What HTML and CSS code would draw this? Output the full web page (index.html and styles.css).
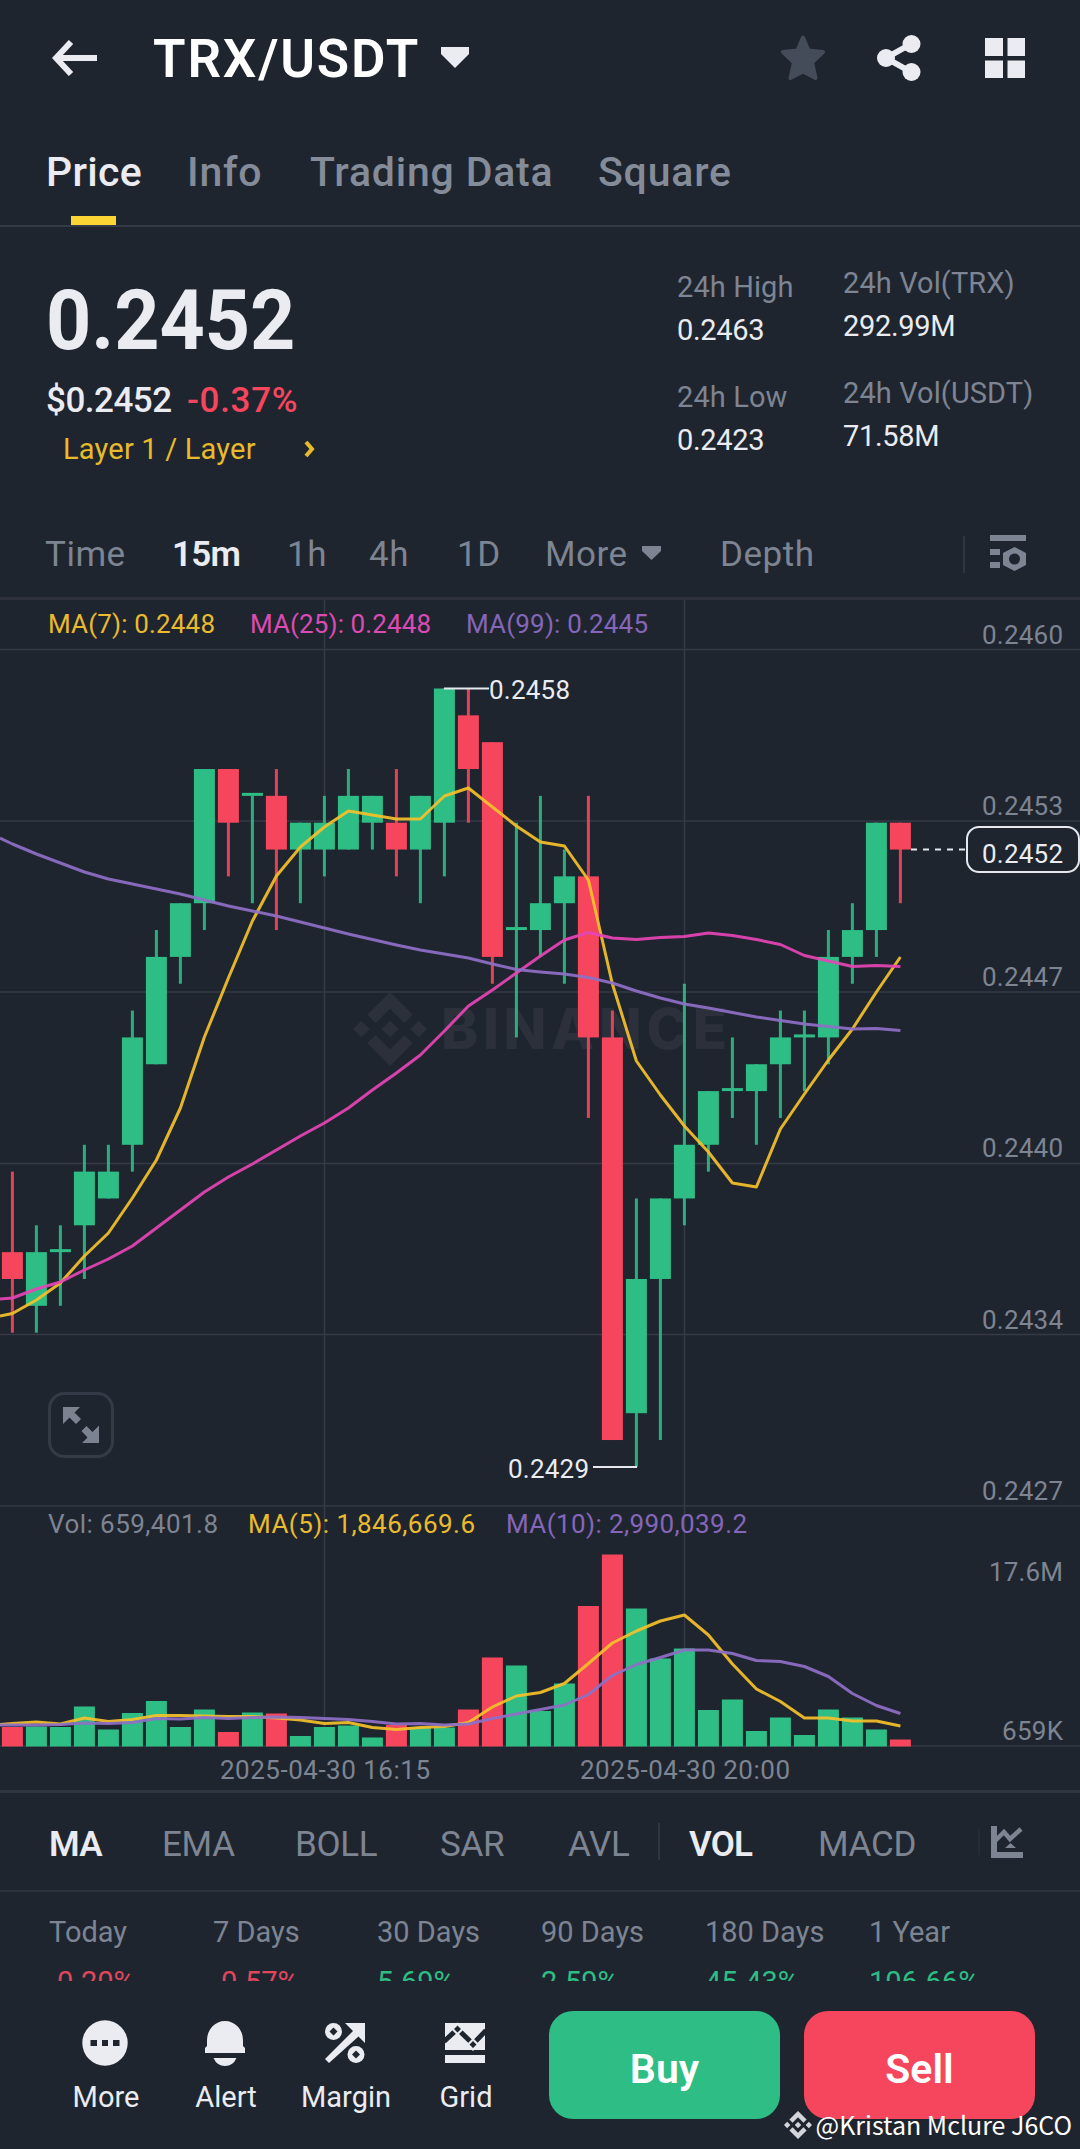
FILE: index.html
```html
<!DOCTYPE html>
<html lang="en">
<head>
    <meta charset="UTF-8">
    <title>TRX/USDT</title>
    <link rel="stylesheet" href="styles.css">
</head>
<body>
<div id="app">
    <header class="header">
        <svg class="icon-back" viewBox="0 0 46 36"><path d="M19 2 L4 18 L19 34 M4 18 H45" fill="none" stroke="currentColor" stroke-width="6"/></svg>
        <h1 class="pair">TRX/USDT</h1>
        <svg class="icon-caret" viewBox="0 0 28 21"><path d="M0 0H28V7L14 21L0 7Z" fill="currentColor"/></svg>
        <svg class="icon-star" viewBox="0 0 46 46"><path d="M23 2.500L28.500 15.500L43 17L32 27.500L35.500 43L23 36.500L10.500 43L14 27.500L3 17L17.500 15.500Z" fill="currentColor" stroke="currentColor" stroke-width="4" stroke-linejoin="round"/></svg>
        <svg class="icon-share" viewBox="0 0 44 46"><path d="M34 9L9 23L34 37" fill="none" stroke="currentColor" stroke-width="6"/><circle cx="34.500" cy="9" r="9"/><circle cx="9" cy="23" r="9"/><circle cx="34.500" cy="37" r="9"/></svg>
        <svg class="icon-grid" viewBox="0 0 40 40"><path d="M0 0H18V18H0ZM22.500 0H40V18H22.500ZM0 22.500H18V40H0ZM22.500 22.500H40V40H22.500Z" fill="currentColor"/></svg>
    </header>

    <ul class="tabs">
        <li class="tab-item selected">Price</li>
        <li class="tab-item">Info</li>
        <li class="tab-item">Trading Data</li>
        <li class="tab-item">Square</li>
    </ul>

    <section class="ticker">
        <div class="ticker-main">
            <div class="price">0.2452</div>
            <div class="price-sub"><span class="price-usd">$0.2452</span><span class="price-change">-0.37%</span></div>
            <div class="tag"><span>Layer 1 / Layer</span><svg viewBox="0 0 11 18"><path d="M2 2L8 9L2 16" fill="none" stroke="currentColor" stroke-width="4"/></svg></div>
        </div>
        <dl class="stats stats-left">
            <dt>24h High</dt><dd>0.2463</dd>
            <dt>24h Low</dt><dd>0.2423</dd>
        </dl>
        <dl class="stats stats-right">
            <dt>24h Vol(TRX)</dt><dd>292.99M</dd>
            <dt>24h Vol(USDT)</dt><dd>71.58M</dd>
        </dl>
    </section>

    <nav class="periods">
        <span>Time</span>
        <span class="active">15m</span>
        <span>1h</span>
        <span>4h</span>
        <span>1D</span>
        <span class="more">More<svg viewBox="0 0 19 14"><path d="M0 0H19V5L9.500 14L0 5Z" fill="currentColor"/></svg></span>
        <span>Depth</span>
        <i class="divider"></i>
        <svg class="icon-settings" viewBox="0 0 36 36"><path d="M0 0H36V6H0ZM0 14H10V20H0ZM0 27H10V33H0Z" fill="currentColor"/><path fill-rule="evenodd" d="M24.500 12L36 18V30L24.500 36L13 30V18ZM24.500 18.500A5.500 5.500 0 1 0 24.500 29.500A5.500 5.500 0 1 0 24.500 18.500Z" fill="currentColor"/></svg>
    </nav>

    <svg id="chart" viewBox="0 600 1080 1190">
        <g class="grid">
            <path d="M0 649.500H1080M0 821H1080M0 992H1080M0 1163.500H1080M0 1334.500H1080M0 1506H1080M0 1746H1080"/>
            <path d="M324.500 600V1746M684.500 600V1746"/>
        </g>
        <g class="watermark">
            <svg x="353" y="992" width="74" height="74" viewBox="0 0 126.600 126.600"><use href="#logo"/></svg>
            <text x="441" y="1049" textLength="286">BINANCE</text>
        </g>
        <g id="candles"></g>
        <g id="volumes"></g>
        <g id="lines"></g>
        <g class="legend">
            <text class="ma-yellow" x="48" y="633" textLength="167">MA(7): 0.2448</text>
            <text class="ma-pink" x="250" y="633" textLength="181">MA(25): 0.2448</text>
            <text class="ma-purple" x="466" y="633" textLength="182">MA(99): 0.2445</text>
            <text x="48" y="1533" textLength="170">Vol: 659,401.8</text>
            <text class="ma-yellow" x="248" y="1533" textLength="227">MA(5): 1,846,669.6</text>
            <text class="ma-purple" x="506" y="1533" textLength="241">MA(10): 2,990,039.2</text>
        </g>
        <g class="axis">
            <text x="982" y="644" textLength="81">0.2460</text>
            <text x="982" y="815" textLength="81">0.2453</text>
            <text x="982" y="986" textLength="81">0.2447</text>
            <text x="982" y="1157" textLength="81">0.2440</text>
            <text x="982" y="1329" textLength="81">0.2434</text>
            <text x="982" y="1500" textLength="81">0.2427</text>
            <text x="989" y="1581" textLength="74">17.6M</text>
            <text x="1002" y="1740" textLength="61">659K</text>
            <text x="220" y="1779" textLength="210">2025-04-30 16:15</text>
            <text x="580" y="1779" textLength="210">2025-04-30 20:00</text>
        </g>
        <g class="marks">
            <path d="M444 688.500H489M593 1467H637"/>
            <path d="M911 849.500H966" stroke-dasharray="6 6"/>
            <rect x="967" y="827" width="112" height="45" rx="12"/>
            <text x="489" y="699" textLength="81">0.2458</text>
            <text x="508" y="1478" textLength="81">0.2429</text>
            <text x="982" y="863" textLength="81">0.2452</text>
        </g>
        <g class="expand">
            <rect x="49.500" y="1393.500" width="63" height="63" rx="15"/>
            <path d="M63 1407H80L74.500 1412.500L81 1419L76 1424L69.500 1417.500L63 1424ZM99 1443H82L87.500 1437.500L81.500 1431L86.500 1426L92.500 1432L99 1425.500Z"/>
        </g>
    </svg>

    <nav class="indicators">
        <span class="active">MA</span>
        <span>EMA</span>
        <span>BOLL</span>
        <span>SAR</span>
        <span>AVL</span>
        <i class="divider"></i>
        <span class="active">VOL</span>
        <span>MACD</span>
        <i class="divider faint"></i>
        <svg class="icon-lines" viewBox="0 0 32 32"><path d="M0 0H6V26H32V32H0ZM19.500 17L25 22H14Z" fill="currentColor"/><path d="M4 15L13 6L19 13L30 3" fill="none" stroke="currentColor" stroke-width="4.500"/></svg>
    </nav>

    <section class="history">
        <div class="history-item down"><h4>Today</h4><p>-0.20%</p></div>
        <div class="history-item down"><h4>7 Days</h4><p>-0.57%</p></div>
        <div class="history-item"><h4>30 Days</h4><p>5.69%</p></div>
        <div class="history-item"><h4>90 Days</h4><p>2.59%</p></div>
        <div class="history-item"><h4>180 Days</h4><p>45.43%</p></div>
        <div class="history-item"><h4>1 Year</h4><p>106.66%</p></div>
    </section>

    <footer class="bottom">
        <div class="action">
            <svg viewBox="0 0 46 46"><circle cx="23" cy="23" r="22.700"/><path class="hole" d="M8.500 20H15V26H8.500ZM20 20H26V26H20ZM31 20H37.500V26H31Z"/></svg>
            <span>More</span>
        </div>
        <div class="action">
            <svg viewBox="0 0 46 46"><path d="M5 20A18 19 0 0 1 41 20V26L43 28V33H3V28L5 26ZM11.500 38H34.500Q31 46 23 46T11.500 38Z"/></svg>
            <span>Alert</span>
        </div>
        <div class="action">
            <svg viewBox="0 0 46 46"><path d="M23 3H43V23L36.500 16.500L7 43L3 39L31 11Z"/><circle cx="11.500" cy="11.500" r="8.500"/><circle cx="34" cy="34.500" r="8.500"/><path class="hole" d="M11.500 7.500L15.500 11.500L11.500 15.500L7.500 11.500ZM34 30.500L38 34.500L34 38.500L30 34.500Z"/></svg>
            <span>Margin</span>
        </div>
        <div class="action">
            <svg viewBox="0 0 46 46"><path d="M3 3H43V30H3ZM3 35H43V43H3Z"/><path class="hole-line" d="M2 21.500L15.500 9L31 24L44 10.500"/><path class="node" d="M15.500 2.500L22 9L15.500 15.500L9 9ZM31 18L37.500 24.500L31 31L24.500 24.500Z"/><path class="hole" d="M15.500 5.500L19 9L15.500 12.500L12 9ZM31 21L34.500 24.500L31 28L27.500 24.500Z"/></svg>
            <span>Grid</span>
        </div>
        <button class="btn btn-buy">Buy</button>
        <button class="btn btn-sell">Sell</button>
    </footer>

    <div class="author">
        <svg viewBox="0 0 126.600 126.600"><path id="logo" d="M38.730 53.200L63.320 28.620L87.920 53.220L102.220 38.910L63.320 0L24.420 38.890ZM0 63.310L14.300 49L28.610 63.310L14.300 77.610ZM38.730 73.410L63.320 98L87.920 73.400L102.230 87.690L63.330 126.600L24.420 87.720ZM98 63.310L112.300 49L126.610 63.310L112.310 77.620ZM77.830 63.300L63.320 48.780L48.790 63.300L63.320 77.830Z"/></svg>
        <span>@Kristan Mclure J6CO</span>
    </div>
</div>
<script>
    // One row per candle: direction, high, open/close top, open/close bottom, low, volume height.
    // Prices are counted in ticks below 0.2458
    let data = [
        ["r", 18, 21, 22, 24, 19.5], ["g", 20, 21, 23, 24, 20], ["g", 20, 21, 21, 23, 19.5],
        ["g", 17, 18, 20, 22, 40], ["g", 17, 18, 19, 19, 17], ["g", 12, 13, 17, 18, 33.5],
        ["g", 9, 10, 14, 14, 45.5], ["g", 8, 8, 10, 11, 19.5], ["g", 3, 3, 8, 9, 37],
        ["r", 3, 3, 5, 7, 14.5], ["g", 4, 4, 4, 8, 34], ["r", 3, 4, 6, 9, 33],
        ["g", 5, 5, 6, 8, 10.5], ["g", 4, 5, 6, 7, 19.5], ["g", 3, 4, 6, 6, 21],
        ["g", 4, 4, 5, 6, 9], ["r", 3, 5, 6, 7, 21.5], ["g", 4, 4, 6, 8, 19.5],
        ["g", 0, 0, 5, 7, 19], ["r", 0, 1, 3, 5, 37], ["r", 2, 2, 10, 11, 89],
        ["g", 5, 9, 9, 13, 81], ["g", 4, 8, 9, 10, 35.5], ["g", 6, 7, 8, 11, 63],
        ["r", 4, 7, 13, 16, 140.5], ["r", 12, 13, 28, 28, 192], ["g", 19, 22, 27, 29, 138],
        ["g", 19, 19, 22, 28, 88], ["g", 11, 17, 19, 20, 98], ["g", 15, 15, 17, 18, 36.5],
        ["g", 13, 15, 15, 16, 47], ["g", 14, 14, 15, 17, 15.5], ["g", 12, 13, 14, 16, 29],
        ["g", 12, 13, 13, 15, 11.5], ["g", 9, 10, 13, 14, 37], ["g", 8, 9, 10, 11, 29],
        ["g", 5, 5, 9, 10, 17], ["r", 5, 5, 6, 8, 7]
    ];
    // y of every average line at each candle, the first value is at the left edge
    let averages = {
        "ma-yellow": [
            [1316, 1313.5, 1300, 1283, 1256, 1233, 1198, 1160, 1108, 1037, 978, 921, 876, 847, 827, 811, 815, 819, 819, 796, 788, 807, 826, 842, 846, 880, 984, 1061, 1095, 1126, 1152, 1183, 1187, 1129, 1094, 1060, 1029, 992, 957],
            [1724.5, 1723.5, 1722, 1724, 1718, 1721.5, 1719.5, 1715.5, 1715.5, 1716, 1716.5, 1716.5, 1718, 1720, 1723.5, 1722.5, 1727.5, 1729.5, 1727.5, 1726.5, 1722.5, 1707, 1696, 1692.5, 1683.5, 1663.5, 1643, 1631, 1621, 1615, 1635, 1664, 1689, 1701.5, 1718, 1718, 1721, 1721, 1726]
        ],
        "ma-pink": [
            [1299, 1298, 1289, 1282, 1270, 1259, 1246, 1228, 1210, 1192, 1177, 1164, 1150, 1136, 1123, 1108, 1090, 1073, 1055, 1031, 1006, 990, 973, 956, 940, 932.5, 938, 939.5, 937.5, 936.5, 933, 935.5, 939.5, 944.5, 955.5, 961, 966.5, 965.5, 966.5]
        ],
        "ma-purple": [
            [838, 844, 854, 863, 872, 879, 884, 889, 894, 900, 906, 911, 916, 922, 928, 934, 939.5, 945, 950, 954, 958, 964, 969.5, 972, 974, 977.5, 983, 991, 998, 1004, 1008, 1012.5, 1017, 1020.5, 1024, 1026.5, 1029, 1028.5, 1030.5],
            [1725, 1725, 1725, 1724.5, 1723, 1723.5, 1722.5, 1718.5, 1719, 1717.5, 1718.5, 1717.5, 1717, 1717.5, 1718.5, 1719.5, 1721.5, 1724, 1723.5, 1725, 1724, 1718.5, 1714, 1709.5, 1705, 1694.5, 1675.5, 1664.5, 1657.5, 1650, 1650, 1653.5, 1660.5, 1661.5, 1666.5, 1676.5, 1693.5, 1705.5, 1713.5]
        ]
    };
    let STEP = 24, LEFT = 12.4, TOP = 688.5, TICK = 26.84, BASE = 1746.5;
    let y = n => TOP + n * TICK;
    let candles = "", volumes = "", lines = "";
    data.forEach(([dir, high, top, bottom, low, vol], i) => {
        let x = LEFT + i * STEP;
        // a candle without a body is a thin dash
        let bodyY = top === bottom ? y(top) - 3 : y(top);
        let bodyH = top === bottom ? 3 : (bottom - top) * TICK;
        candles += `<rect class="${dir} wick" x="${x - 1.5}" y="${y(high)}" width="3" height="${(low - high) * TICK}"/>`;
        candles += `<rect class="${dir}" x="${x - 10.5}" y="${bodyY}" width="21" height="${bodyH}"/>`;
        volumes += `<rect class="${dir}" x="${x - 10.5}" y="${BASE - vol}" width="21" height="${vol}"/>`;
    });
    for(let name in averages){
        averages[name].forEach(line => {
            let points = line.map((v, i) => (i === 0 ? 0 : LEFT + (i - 1) * STEP) + "," + v);
            lines += `<polyline class="${name}" points="${points.join(" ")}"/>`;
        });
    }
    document.querySelector("#candles").innerHTML = candles;
    document.querySelector("#volumes").innerHTML = volumes;
    document.querySelector("#lines").innerHTML = lines;
</script>
</body>
</html>
```
FILE: styles.css
```css
*{
    margin: 0;
    padding: 0;
    box-sizing: border-box;
}
body{
    background: #1f252f;
    color: #eaecf1;
    font-family: Roboto, "Liberation Sans", sans-serif;
}
#app{
    position: relative;
    width: 1080px;
    height: 2149px;
    overflow: hidden;
}
svg{
    display: block;
    flex: none;
    fill: currentColor;
}
ul{
    list-style: none;
}
.header{
    display: flex;
    align-items: center;
    height: 117px;
    padding: 0 0 2px 52px;
}
.icon-back{
    width: 46px;
    height: 36px;
}
.pair{
    width: 288px;
    margin-left: 55px;
    padding-top: 3px;
    font-size: 53px;
    font-weight: 600;
    letter-spacing: 1.8px;
    color: #fff;
}
.icon-caret{
    width: 28px;
    height: 21px;
}
.icon-star{
    width: 46px;
    height: 46px;
    margin-left: 311px;
    color: #454c59;
}
.icon-share{
    width: 44px;
    height: 46px;
    margin-left: 51px;
}
.icon-grid{
    width: 40px;
    height: 40px;
    margin-left: 64px;
}
.tabs{
    display: grid;
    grid-template-columns: 141px 123px 288px auto;
    height: 110px;
    padding-left: 46px;
    border-bottom: 2px solid #343a46;
    line-height: 110px;
    font-size: 41px;
    font-weight: 500;
    letter-spacing: .8px;
    color: #848b99;
}
.tab-item.selected{
    width: 102px;
    letter-spacing: .3px;
    color: #eaecf1;
}
.tab-item.selected::after{
    content: "";
    display: block;
    width: 45px;
    height: 9px;
    margin: -11px 0 0 25px;
    background: #fcd535;
}
.ticker{
    display: flex;
    height: 290px;
    padding-left: 46px;
}
.ticker-main{
    width: 631px;
    padding-top: 44px;
}
.price{
    font-size: 84px;
    line-height: 100px;
    font-weight: 700;
    transform: scaleX(.94);
    transform-origin: 0 0;
}
.price-sub{
    display: flex;
    line-height: 60px;
    font-size: 35px;
    font-weight: 500;
}
.price-usd{
    width: 141px;
    letter-spacing: -.5px;
}
.price-change{
    letter-spacing: .7px;
    color: #f6465d;
}
.tag{
    display: flex;
    align-items: center;
    justify-content: space-between;
    width: 269px;
    padding-left: 17px;
    line-height: 36px;
    font-size: 29px;
    letter-spacing: .2px;
    color: #e8bb2c;
}
.tag svg{
    width: 11px;
    height: 18px;
}
.stats{
    font-size: 29px;
}
.stats dt{
    height: 42px;
    line-height: 42px;
    letter-spacing: .1px;
    color: #7d8492;
}
.stats dd{
    height: 68px;
    line-height: 44px;
    letter-spacing: -.3px;
}
.stats-left{
    width: 166px;
    padding-top: 39px;
}
.stats-right{
    padding-top: 35px;
}
.periods{
    display: grid;
    grid-template-columns: 127px 115px 82px 88px 88px 175px 243px 27px 36px;
    align-items: center;
    height: 83px;
    padding: 0 0 5px 45px;
    border-bottom: 3px solid #2c313c;
    font-size: 35px;
    letter-spacing: .5px;
    color: #7d8492;
}
.periods .active, .indicators .active{
    color: #eaecf1;
    font-weight: 600;
    letter-spacing: -.8px;
}
.periods .more{
    display: flex;
    align-items: center;
    gap: 14px;
}
.periods .more svg{
    width: 19px;
    height: 14px;
    margin-bottom: 3px;
}
.periods .icon-settings{
    margin-bottom: 3px;
}
.divider{
    width: 2px;
    height: 37px;
    background: #303641;
}
.icon-settings{
    width: 36px;
    height: 36px;
}
#chart{
    width: 1080px;
    height: 1190px;
    font-size: 26px;
}
.grid path{
    stroke: #343a46;
    stroke-width: 1.5;
}
.watermark{
    color: #2b303b;
    fill: #2b303b;
    font: 800 56px Inter, sans-serif;
}
.r{
    fill: #f6465d;
}
.g{
    fill: #2ebd85;
}
.wick{
    opacity: .9;
}
#lines polyline{
    fill: none;
    stroke-width: 3;
    stroke-linejoin: round;
    opacity: .93;
}
#lines .ma-yellow{
    stroke: #f3c02a;
}
#lines .ma-pink{
    stroke: #e545b4;
}
#lines .ma-purple{
    stroke: #8e6fc6;
}
.legend, .axis{
    fill: #7d8492;
}
.legend .ma-yellow{
    fill: #eabb2e;
}
.legend .ma-pink{
    fill: #dc4bb2;
}
.legend .ma-purple{
    fill: #8566b9;
}
.marks path, .marks rect{
    fill: none;
    stroke: #e6e8ee;
    stroke-width: 2;
}
.marks rect{
    fill: #1f252f;
}
.expand rect{
    fill: none;
    stroke: #343a46;
    stroke-width: 3;
}
.expand path{
    fill: #7b8290;
}
.indicators{
    display: grid;
    grid-template-columns: 113px 133px 145px 128px 90px 31px 129px 160px 13px 32px;
    align-items: center;
    height: 102px;
    padding: 5px 0 0 49px;
    border-top: 3px solid #303641;
    border-bottom: 2px solid #2c313c;
    font-size: 35px;
    letter-spacing: -.3px;
    color: #7d8492;
}
.indicators .divider, .icon-lines{
    margin-bottom: 5px;
}
.divider.faint{
    opacity: .4;
    height: 26px;
}
.icon-lines{
    width: 32px;
    height: 32px;
}
.history{
    display: grid;
    grid-template-columns: repeat(6, 164px);
    height: 89px;
    padding: 18px 0 0 49px;
    overflow: hidden;
    font-size: 29px;
    color: #2ebd85;
}
.history-item h4{
    height: 44px;
    line-height: 44px;
    font-weight: 400;
    color: #7d8492;
}
.history-item p{
    line-height: 56px;
}
.history-item.down{
    color: #e0475c;
}
.bottom{
    display: flex;
    height: 168px;
    padding: 30px 0 0 45px;
}
.action{
    display: flex;
    flex-direction: column;
    align-items: center;
    width: 120px;
    padding-top: 9px;
}
.action svg{
    width: 46px;
    height: 46px;
}
.action .hole{
    fill: #1f252f;
}
.action .hole-line{
    fill: none;
    stroke: #1f252f;
    stroke-width: 5;
}
.action span{
    margin-top: 13px;
    padding-left: 2px;
    line-height: 36px;
    font-size: 29px;
}
.btn{
    width: 231px;
    height: 108px;
    padding-top: 7px;
    border: none;
    border-radius: 24px;
    color: #fff;
    font: 600 41px Roboto, sans-serif;
}
.btn-buy{
    margin-left: 24px;
    background: #2ebd85;
}
.btn-sell{
    margin-left: 24px;
    background: #f6465d;
}
/* account name over the corner of the screen */
.author{
    position: absolute;
    right: 8px;
    bottom: 6px;
    display: flex;
    align-items: center;
    gap: 4px;
    height: 36px;
    line-height: 36px;
    font-family: "Noto Sans CJK SC", sans-serif;
    font-size: 25px;
    color: #fff;
}
.author span{
    margin-top: -3px;
}
.author svg{
    width: 28px;
    height: 28px;
    color: #d3d5da;
}
```
